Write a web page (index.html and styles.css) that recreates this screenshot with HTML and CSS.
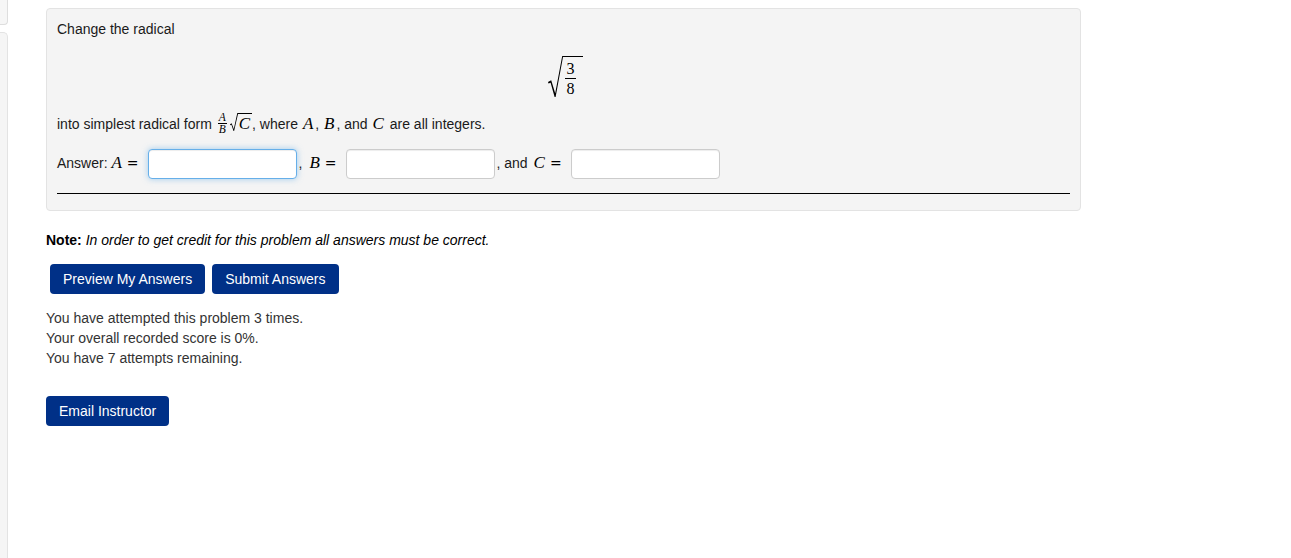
FILE: index.html
```html
<!DOCTYPE html>
<html lang="en">
<head>
<meta charset="utf-8">
<title>Problem</title>
<link rel="stylesheet" href="styles.css">
</head>
<body>
<div class="page">
  <aside class="side">
    <div class="side-top"></div>
    <div class="side-bottom"></div>
  </aside>
  <main class="main">
    <div class="problem">
      <p class="line">Change the radical</p>
      <div class="display">
        <svg class="surd" viewBox="0 0 15 41" width="15" height="41" aria-hidden="true"><polygon points="0,26 3.2,24.2 7.2,37.2 14.2,0 15,0 15,1.1 7.6,41 6.6,41 2.6,26.8 0.5,27.4" fill="#000"/></svg>
        <span class="radicand">
          <span class="dfrac"><span class="dnum">3</span><span class="dbar"></span><span class="dden">8</span></span>
        </span>
      </div>
      <p class="line">into simplest radical form <span class="ifrac"><span class="inum">A</span><span class="ibar"></span><span class="iden">B</span></span><svg class="isurd" viewBox="0 0 8 18" width="8" height="18" aria-hidden="true"><polygon points="0,11.2 1.6,10.3 3.8,16 7.3,0 8,0 8,0.9 4.1,18 3.5,18 1.4,11.8 0.4,12.2" fill="#000"/></svg><span class="irad mv">C</span>, where <span class="mv wide">A</span>, <span class="mv wide">B</span>, and <span class="mv wide">C</span> are all integers.</p>
      <div class="answer">Answer: <span class="mv">A</span><span class="eq">=</span><input class="ans focused" type="text" aria-label="A"><span class="sep">,</span> <span class="mv">B</span><span class="eq">=</span><input class="ans" type="text" aria-label="B"><span class="sep and">, and</span> <span class="mv">C</span><span class="eq">=</span><input class="ans" type="text" aria-label="C"></div>
      <hr class="rule">
    </div>
    <p class="note"><b>Note:</b> <i>In order to get credit for this problem all answers must be correct.</i></p>
    <div class="buttons">
      <button class="btn" type="button">Preview My Answers</button>
      <button class="btn" type="button">Submit Answers</button>
    </div>
    <div class="attempts">
      <div>You have attempted this problem 3 times.</div>
      <div>Your overall recorded score is 0%.</div>
      <div>You have 7 attempts remaining.</div>
    </div>
    <button class="btn email" type="button">Email Instructor</button>
  </main>
</div>
</body>
</html>
```

FILE: styles.css
```css
html, body {
  margin: 0;
  padding: 0;
  background: #fff;
}

body {
  font-family: "Liberation Sans", Arial, sans-serif;
  font-size: 14px;
  line-height: 20px;
  color: #1a1a1a;
}

.page {
  display: flex;
  align-items: flex-start;
  min-height: 558px;
}

.side {
  width: 8px;
  display: flex;
  flex-direction: column;
}

.side-top {
  height: 24px;
  background: #f6f6f6;
  border-right: 1px solid #dedede;
  border-bottom: 1px solid #dedede;
  border-bottom-right-radius: 4px;
}

.side-bottom {
  margin-top: 7px;
  height: 540px;
  background: #f5f5f5;
  border-top: 1px solid #e3e3e3;
  border-right: 1px solid #e3e3e3;
  border-top-right-radius: 5px;
}

.main {
  margin-left: 38px;
  padding-top: 8px;
}

.problem {
  width: 1035px;
  box-sizing: border-box;
  background: #f4f4f4;
  border: 1px solid #e3e3e3;
  border-radius: 4px;
  padding: 10px;
}

.line {
  margin: 0;
}

.display {
  display: flex;
  justify-content: center;
  align-items: flex-start;
  margin: 17px 0 17px;
  height: 40px;
}

.surd {
  display: block;
  margin-left: 4px;
}

.radicand {
  border-top: 1px solid #000;
  padding: 4px 7px 0 2px;
}

.dfrac {
  display: flex;
  flex-direction: column;
  align-items: center;
  font-family: "Liberation Serif", "Times New Roman", serif;
  font-size: 16px;
  line-height: 15px;
  color: #000;
}

.dnum, .dden {
  padding: 0 1.5px;
}

.dbar {
  align-self: stretch;
  border-top: 1px solid #000;
  margin: 2px 0 2px;
}

.mv {
  font-family: "Liberation Serif", "Times New Roman", serif;
  font-style: italic;
  font-size: 17px;
  color: #000;
  padding-right: 1px;
}

.mv.wide {
  padding: 0 2px 0 1px;
}

.ifrac {
  display: inline-flex;
  flex-direction: column;
  align-items: center;
  vertical-align: 8px;
  font-family: "Liberation Serif", "Times New Roman", serif;
  font-style: italic;
  font-size: 11.5px;
  line-height: 9px;
  color: #000;
  margin: 0 3px 0 2px;
}

.inum, .iden {
  padding: 0 1px;
}

.ibar {
  align-self: stretch;
  border-top: 1px solid #000;
  margin: 1px 0 1px;
}

.isurd {
  vertical-align: -2px;
}

.irad {
  display: inline-block;
  border-top: 1px solid #000;
  padding: 2px 2px 0 1px;
  line-height: 15px;
}

.answer {
  margin-top: 15px;
}

.eq {
  font-family: "DejaVu Serif", "Liberation Serif", serif;
  font-size: 14px;
  color: #000;
  margin: 0 2px 0 4px;
}

.sep {
  margin: 0 3px 0 2px;
}

.sep.and {
  margin-right: 2px;
}

.ans {
  box-sizing: border-box;
  width: 149px;
  height: 30px;
  vertical-align: middle;
  margin: 0 0 0 7px;
  padding: 4px 8px;
  font: 14px "Liberation Sans", Arial, sans-serif;
  background: #fff;
  border: 1px solid #cccccc;
  border-radius: 4px;
  box-shadow: inset 0 1px 1px rgba(0, 0, 0, 0.075);
  outline: none;
}

.ans.focused {
  border-color: #66afe9;
  box-shadow: inset 0 1px 1px rgba(0, 0, 0, 0.075), 0 0 6px rgba(102, 175, 233, 0.6);
}

.rule {
  border: 0;
  border-top: 1px solid #000;
  height: 0;
  margin: 14px 0 6px;
}

.note {
  margin: 19px 0 0;
  color: #000;
}

.buttons {
  display: flex;
  gap: 7px;
  margin: 14px 0 0 4px;
}

.btn {
  height: 30px;
  padding: 0 13px;
  border: 0;
  border-radius: 4px;
  background: #003087;
  color: #fff;
  font: 14px/20px "Liberation Sans", Arial, sans-serif;
  cursor: pointer;
}

.attempts {
  margin-top: 14px;
  color: #333;
}

.email {
  display: block;
  margin-top: 28px;
}
```
